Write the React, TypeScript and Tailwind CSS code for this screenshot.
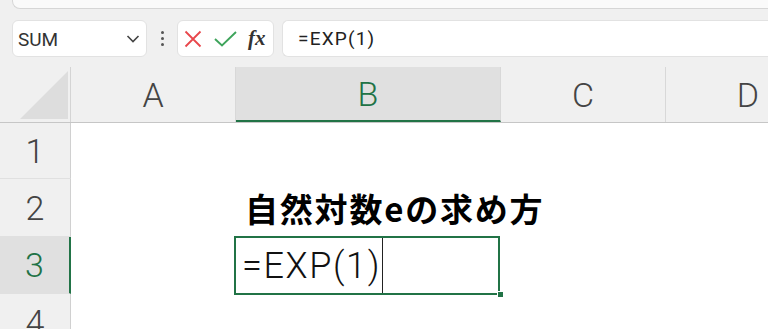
import React from "react";

function Corner() {
  return (
    <div className="w-[71px] h-full border-r border-[#d4d4d4] shrink-0">
      <svg width="71" height="55" viewBox="0 0 71 55">
        <polygon points="20,52 68,4 68,52" fill="#dddddd" />
      </svg>
    </div>
  );
}

function ColHead({ label, w, sel }: { label: string; w: string; sel?: boolean }) {
  return (
    <div
      className={`${w} shrink-0 h-full flex items-center justify-center border-r border-[#d8d8d8] ${
        sel ? "bg-[#e0e0e0] border-b-2 border-b-[#217346] text-[#217346]" : "text-[#444444]"
      }`}
    >
      <span className="text-[34px] font-light leading-none">{label}</span>
    </div>
  );
}

function RowHead({ label, sel }: { label: string; sel?: boolean }) {
  return (
    <div
      className={`w-[71px] shrink-0 h-full flex items-center justify-center border-b border-[#e0e0e0] ${
        sel
          ? "bg-[#e0e0e0] border-r-2 border-r-[#217346] text-[#217346]"
          : "border-r border-r-[#d0d0d0] text-[#444444]"
      }`}
    >
      <span className="text-[34px] font-light leading-none">{label}</span>
    </div>
  );
}

export default function App() {
  return (
    <div
      className="w-[768px] h-[329px] overflow-hidden bg-[#f0f0f0] flex flex-col"
      style={{ fontFamily: "Roboto, 'Noto Sans CJK JP', sans-serif" }}
    >
      {/* ribbon remnant */}
      <div className="h-[9px] pl-[12px] shrink-0">
        <div className="h-full bg-[#fafafa] border-b border-l border-[#d6d6d6] rounded-bl-lg" />
      </div>

      {/* formula bar */}
      <div className="mt-[11px] h-[37px] flex items-stretch pl-[12px] shrink-0">
        <div className="w-[135px] bg-white rounded-md border border-[#e2e2e2] flex items-center pl-[5px] pr-[5px]">
          <span className="text-[19px] text-[#333] flex-1 pt-[3px]">SUM</span>
          <svg width="14" height="10" viewBox="0 0 14 10" className="mr-[1px]">
            <polyline points="1.5,2 7,7.5 12.5,2" fill="none" stroke="#444" strokeWidth="1.6" />
          </svg>
        </div>
        <div className="w-[30px] flex flex-col items-center justify-center gap-[3px]">
          <div className="w-[3px] h-[3px] bg-[#555] rounded-full" />
          <div className="w-[3px] h-[3px] bg-[#555] rounded-full" />
          <div className="w-[3px] h-[3px] bg-[#555] rounded-full" />
        </div>
        <div className="w-[97px] bg-white rounded-md border border-[#e2e2e2] flex items-center">
          <svg width="18" height="18" viewBox="0 0 18 18" className="ml-[6px]">
            <path d="M1.5 1.5 L16.5 16.5 M16.5 1.5 L1.5 16.5" stroke="#e8474c" strokeWidth="1.8" fill="none" />
          </svg>
          <svg width="23" height="16" viewBox="0 0 23 16" className="ml-[12px]">
            <polyline points="1,8 8,14.5 22,1" stroke="#3ea45b" strokeWidth="1.9" fill="none" />
          </svg>
          <span
            className="ml-[11px] text-[21px] italic font-bold text-[#333] leading-none"
            style={{ fontFamily: "'Liberation Serif', serif" }}
          >
            fx
          </span>
        </div>
        <div className="ml-[8px] flex-1 bg-white rounded-l-md border border-r-0 border-[#e2e2e2] flex items-center pl-[15px]">
          <span className="text-[19px] text-[#222] pt-[2px] tracking-[1.2px]">=EXP(1)</span>
        </div>
      </div>

      {/* grid */}
      <div className="mt-[10px] flex flex-col shrink-0">
        <div className="h-[56px] flex shrink-0 border-b border-[#c6c6c6]">
          <Corner />
          <ColHead label="A" w="w-[165px]" />
          <ColHead label="B" w="w-[265px]" sel />
          <ColHead label="C" w="w-[165px]" />
          <ColHead label="D" w="w-[165px]" />
        </div>

        {/* row 1 */}
        <div className="h-[56px] flex shrink-0">
          <RowHead label="1" />
          <div className="flex-1 bg-white" />
        </div>

        {/* row 2 */}
        <div className="h-[58px] flex shrink-0">
          <RowHead label="2" />
          <div className="w-[165px] bg-white shrink-0" />
          <div className="flex-1 bg-white flex items-end pl-[9px] pb-[12px]">
            <span
              className="text-[33px] font-bold text-black whitespace-nowrap leading-none tracking-[1.8px]"
              style={{ fontFamily: "'Noto Sans CJK JP', sans-serif" }}
            >
              自然対数eの求め方
            </span>
          </div>
        </div>

        {/* row 3 */}
        <div className="h-[57px] flex shrink-0">
          <RowHead label="3" sel />
          <div className="w-[164px] bg-white shrink-0" />
          <div className="w-[266px] bg-white shrink-0 relative flex items-stretch pl-[7px]">
            <div className="absolute -top-[1px] -left-[1px] w-[266px] h-[59px] border-2 border-[#217346]" />
            <div className="absolute -bottom-[4px] right-[-3px] w-[7px] h-[7px] bg-[#217346] border border-white" />
            <span className="self-center text-[36px] font-light text-[#111] leading-none whitespace-nowrap tracking-[1.6px]">
              =EXP(1)
            </span>
            <div className="ml-[1px] w-px bg-[#222]" />
          </div>
          <div className="flex-1 bg-white" />
        </div>

        {/* row 4 */}
        <div className="h-[57px] flex shrink-0">
          <RowHead label="4" />
          <div className="flex-1 bg-white" />
        </div>
      </div>
    </div>
  );
}
